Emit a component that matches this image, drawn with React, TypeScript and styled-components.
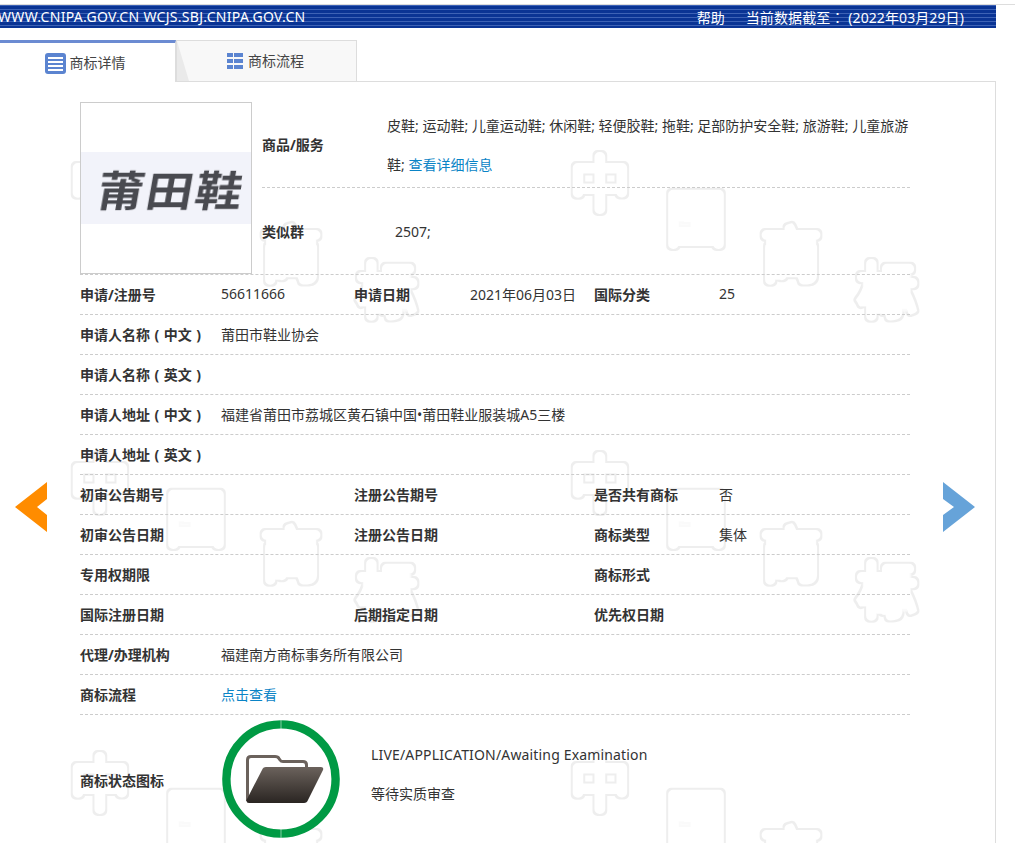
import React from "react"
import styled, { createGlobalStyle } from "styled-components"

const CJK = `"Noto Sans", "Noto Sans CJK SC", sans-serif`

const GlobalStyle = createGlobalStyle`
  html, body {
    margin: 0;
    padding: 0;
    background: #fff;
    overflow: hidden;
  }
  body {
    font-family: ${CJK};
    font-size: 14px;
    color: #333;
  }
`

const Page = styled.div`
  position: relative;
  width: 1015px;
  height: 843px;
  overflow: hidden;
  padding-top: 4px;
  box-sizing: border-box;
`

const TopRule = styled.div`
  height: 1px;
  background: #ddd;
`

const TopBar = styled.header`
  width: 996px;
  height: 23px;
  display: flex;
  justify-content: space-between;
  align-items: center;
  color: #fff;
  font-size: 14px;
  white-space: nowrap;
  background: linear-gradient(to bottom, #0a3494 75%, #3d62b5 75%) 0 1px / 100% 4px;
`

const Domains = styled.span`
  margin-left: -2px;
  letter-spacing: 0.3px;
`

const TopBarRight = styled.div`
  display: flex;
  gap: 21px;
  padding-right: 32px;
`

const DateText = styled.span`
  letter-spacing: 0.1px;
`

const FullColon = styled.span`
  font-family: "Noto Sans CJK TC", sans-serif;
`

const Paren = styled.span`
  padding: 0 4.5px;
`

const Tabs = styled.nav`
  display: flex;
  margin-top: 12px;
  height: 41px;
  width: 996px;
  box-sizing: border-box;
`

const Tab = styled.div<{ $active?: boolean }>`
  position: relative;
  box-sizing: border-box;
  display: flex;
  align-items: center;
  justify-content: center;
  gap: 4px;
  font-size: 14px;
  color: #444;
  ${(p) =>
    p.$active
      ? `
    width: 176px;
    height: 42px;
    padding: 2px 13px 0 8px;
    background: #fff;
    border-top: 3px solid #6b8bd2;
    border-right: 1px solid #ddd;
    z-index: 2;
  `
      : `
    width: 181px;
    padding: 0 6px 0 4px;
    background: #f8f8f8;
    border: 1px solid #ddd;
    border-bottom: 0;
    gap: 5px;
  `}
`

const TabLabel = styled.span`
  margin-bottom: 3px;
`

const TabCorner = styled.svg`
  position: absolute;
  left: 0;
  top: 0;
`

const Panel = styled.main`
  position: relative;
  width: 996px;
  box-sizing: border-box;
  height: 770px;
  border-top: 1px solid #ddd;
  border-right: 1px solid #ddd;
  padding: 20px 85px 0 80px;
`

const Watermark = styled.svg`
  position: absolute;
  left: 0;
  top: 0;
  pointer-events: none;
`

const Arrow = styled.svg<{ $side: "left" | "right" }>`
  position: absolute;
  top: 482px;
  left: ${(p) => (p.$side === "left" ? "15px" : "943px")};
`

const Content = styled.div`
  position: relative;
  width: 830px;
`

const Head = styled.section`
  display: flex;
  gap: 10px;
`

const LogoBox = styled.div`
  box-sizing: border-box;
  flex: none;
  width: 172px;
  height: 172px;
  border: 1px solid #ccc;
  background: #fff;
  display: flex;
  align-items: center;
`

const LogoBand = styled.div`
  width: 100%;
  height: 72px;
  background: #f2f3fa;
  display: flex;
  align-items: center;
  justify-content: center;
  overflow: hidden;
`

const LogoText = styled.span`
  display: block;
  padding-left: 11px;
  font-family: "Noto Sans CJK SC", sans-serif;
  font-weight: 700;
  font-size: 47px;
  line-height: 1;
  letter-spacing: 2px;
  color: #494a50;
  white-space: nowrap;
  transform: skewX(-10deg) scaleY(0.88);
  filter: blur(0.4px);
`

const HeadRows = styled.div`
  flex: 1;
  min-width: 0;
`

const ServiceRow = styled.div`
  display: grid;
  grid-template-columns: 125px 1fr;
  align-items: center;
  height: 85px;
  border-bottom: 1px dashed #ccc;
`

const GroupRow = styled.div`
  display: grid;
  grid-template-columns: 133px 1fr;
  align-items: center;
  height: 86px;
`

const ServiceText = styled.div`
  line-height: 39px;
`

const Label = styled.span`
  font-weight: 700;
  color: #333;
  white-space: nowrap;
`

const ServiceLabel = styled(Label)`
  margin-bottom: 2px;
`

const Value = styled.span<{ $span?: number }>`
  white-space: nowrap;
  color: #333;
  ${(p) => (p.$span ? `grid-column: span ${p.$span};` : "")}
`

const Link = styled.a`
  color: #0a84c6;
  text-decoration: none;
  cursor: pointer;
`

const Row = styled.div`
  display: grid;
  grid-template-columns: 141px 133px 116px 124px 125px 191px;
  align-items: center;
  height: 40px;
  padding-bottom: 2px;
  box-sizing: border-box;
  border-top: 1px dashed #ccc;
`

const StatusRow = styled.div`
  display: flex;
  align-items: flex-start;
  height: 130px;
  box-sizing: border-box;
  border-top: 1px dashed #ccc;
`

const StatusLabel = styled(Label)`
  width: 141px;
  flex: none;
  margin-top: 55px;
`

const StatusIcon = styled.svg`
  flex: none;
  margin-top: 4px;
`

const StatusText = styled.div`
  margin-left: 30px;
  padding-top: 30px;
  display: flex;
  flex-direction: column;
  gap: 20px;
  line-height: 19px;
`

const StatusEnglish = styled.span`
  letter-spacing: 0.16px;
`

const wmGlyphs = [
  { c: "中", x: 100, y: 206 },
  { c: "国", x: 196, y: 241 },
  { c: "商", x: 291, y: 277 },
  { c: "标", x: 387, y: 313 },
]

const withLang = (head: string, lang: string) => (
  <>
    {head}
    <Paren>(</Paren>
    {lang}
    <Paren>)</Paren>
  </>
)

const fields: { label: React.ReactNode; id: string; value?: React.ReactNode; span?: number }[][] = [
  [
    { id: "no", label: "申请/注册号", value: "56611666" },
    { id: "date", label: "申请日期", value: "2021年06月03日" },
    { id: "cls", label: "国际分类", value: "25" },
  ],
  [{ id: "namecn", label: withLang("申请人名称", "中文"), value: "莆田市鞋业协会", span: 5 }],
  [{ id: "nameen", label: withLang("申请人名称", "英文") }],
  [
    {
      id: "addrcn",
      label: withLang("申请人地址", "中文"),
      value: "福建省莆田市荔城区黄石镇中国•莆田鞋业服装城A5三楼",
      span: 5,
    },
  ],
  [{ id: "addren", label: withLang("申请人地址", "英文") }],
  [
    { id: "p1", label: "初审公告期号", value: "" },
    { id: "p2", label: "注册公告期号", value: "" },
    { id: "p3", label: "是否共有商标", value: "否" },
  ],
  [
    { id: "d1", label: "初审公告日期", value: "" },
    { id: "d2", label: "注册公告日期", value: "" },
    { id: "d3", label: "商标类型", value: "集体" },
  ],
  [
    { id: "t1", label: "专用权期限", value: "", span: 3 },
    { id: "t2", label: "商标形式", value: "" },
  ],
  [
    { id: "i1", label: "国际注册日期", value: "" },
    { id: "i2", label: "后期指定日期", value: "" },
    { id: "i3", label: "优先权日期", value: "" },
  ],
  [{ id: "agent", label: "代理/办理机构", value: "福建南方商标事务所有限公司", span: 5 }],
  [{ id: "flow", label: "商标流程", value: <Link>点击查看</Link>, span: 5 }],
]

export default function App() {
  return (
    <Page>
      <GlobalStyle />
      <Watermark width="1015" height="843">
        <defs>
          <filter id="blobOutline" filterUnits="userSpaceOnUse" x="0" y="0" width="1015" height="843">
            <feMorphology in="SourceAlpha" operator="erode" radius="1.5" result="inner" />
            <feFlood floodColor="#eeeeee" />
            <feComposite in2="SourceAlpha" operator="in" result="solid" />
            <feComposite in="solid" in2="inner" operator="out" />
          </filter>
        </defs>
        <g
          filter="url(#blobOutline)"
          fontFamily="Noto Sans CJK SC"
          fontSize="60"
          textAnchor="middle"
          stroke="#000"
          strokeWidth="10"
          strokeLinejoin="round"
          strokeLinecap="round"
        >
          {[0, 300, 600].map((dy) =>
            [0, 500].map((dx) =>
              wmGlyphs.map((g) => (
                <text key={`${dx}-${dy}-${g.c}`} x={g.x + dx} y={g.y + dy}>
                  {g.c}
                </text>
              ))
            )
          )}
        </g>
      </Watermark>
      <TopRule />
      <TopBar>
        <Domains>WWW.CNIPA.GOV.CN WCJS.SBJ.CNIPA.GOV.CN</Domains>
        <TopBarRight>
          <span>帮助</span>
          <DateText>
            当前数据截至<FullColon>：</FullColon> (2022年03月29日)
          </DateText>
        </TopBarRight>
      </TopBar>
      <Tabs>
        <Tab $active>
          <svg width="21" height="21" viewBox="0 0 21 21">
            <rect width="21" height="21" rx="3" fill="#5b84d0" />
            <rect x="3" y="4" width="15" height="2" fill="#fff" />
            <rect x="3" y="8" width="15" height="2" fill="#fff" />
            <rect x="3" y="12" width="15" height="2" fill="#fff" />
            <rect x="3" y="16" width="15" height="2" fill="#fff" />
          </svg>
          <TabLabel>商标详情</TabLabel>
        </Tab>
        <Tab>
          <TabCorner width="12" height="40" viewBox="0 0 12 40">
            <polygon points="0,0 12,40 0,40" fill="#eaeaea" />
          </TabCorner>
          <svg width="16" height="16" viewBox="0 0 16 16">
            <rect x="0" y="0" width="6" height="4" fill="#5b84d0" />
            <rect x="7" y="0" width="9" height="4" fill="#5b84d0" />
            <rect x="0" y="6" width="6" height="4" fill="#5b84d0" />
            <rect x="7" y="6" width="9" height="4" fill="#5b84d0" />
            <rect x="0" y="12" width="6" height="4" fill="#5b84d0" />
            <rect x="7" y="12" width="9" height="4" fill="#5b84d0" />
          </svg>
          <TabLabel>商标流程</TabLabel>
        </Tab>
      </Tabs>
      <Panel>
        <Content>
          <Head>
            <LogoBox>
              <LogoBand>
                <LogoText>莆田鞋</LogoText>
              </LogoBand>
            </LogoBox>
            <HeadRows>
              <ServiceRow>
                <ServiceLabel>商品/服务</ServiceLabel>
                <ServiceText>
                  皮鞋; 运动鞋; 儿童运动鞋; 休闲鞋; 轻便胶鞋; 拖鞋; 足部防护安全鞋; 旅游鞋; 儿童旅游鞋;{" "}
                  <Link>查看详细信息</Link>
                </ServiceText>
              </ServiceRow>
              <GroupRow>
                <Label>类似群</Label>
                <Value>2507;</Value>
              </GroupRow>
            </HeadRows>
          </Head>
          {fields.map((cells, i) => (
            <Row key={i}>
              {cells.map((cell) => (
                <React.Fragment key={cell.id}>
                  <Label>{cell.label}</Label>
                  <Value $span={cell.span}>{cell.value}</Value>
                </React.Fragment>
              ))}
            </Row>
          ))}
          <StatusRow>
            <StatusLabel>商标状态图标</StatusLabel>
            <StatusIcon width="120" height="120" viewBox="0 0 120 120">
              <defs>
                <linearGradient id="folderFill" x1="0" y1="0" x2="0" y2="1">
                  <stop offset="0" stopColor="#6b625c" />
                  <stop offset="1" stopColor="#2a2522" />
                </linearGradient>
              </defs>
              <circle cx="60" cy="60" r="54.6" fill="#fff" stroke="#009a44" strokeWidth="8.4" />
              <rect x="59.7" y="1" width="0.6" height="9" fill="#d8efe0" />
              <rect x="59.7" y="110" width="0.6" height="9" fill="#d8efe0" />
              <path
                d="M26.5 82 V41 q0-3.5 3.5-3.5 h24 q3 0 4 2 l1 1.5 q1 1.5 3 1.5 h20 q3.5 0 3.5 3.5 v4"
                fill="none"
                stroke="#6b625c"
                strokeWidth="3"
              />
              <path
                d="M45 48 H100 q3 0 2 3 L87 81 q-1 3 -4 3 H28 q-3 0 -2.5 -3 L41 51 q1 -3 4 -3 Z"
                fill="url(#folderFill)"
              />
            </StatusIcon>
            <StatusText>
              <StatusEnglish>LIVE/APPLICATION/Awaiting Examination</StatusEnglish>
              <span>等待实质审查</span>
            </StatusText>
          </StatusRow>
        </Content>
      </Panel>
      <Arrow $side="left" width="32" height="50" viewBox="0 0 32 50">
        <polygon points="32,0 0,25 32,50 32,33 22,25 32,17" fill="#ff8c00" />
      </Arrow>
      <Arrow $side="right" width="32" height="50" viewBox="0 0 32 50">
        <polygon points="0,0 32,25 0,50 0,33 11,25 0,17" fill="#66a3d9" />
      </Arrow>
    </Page>
  )
}
